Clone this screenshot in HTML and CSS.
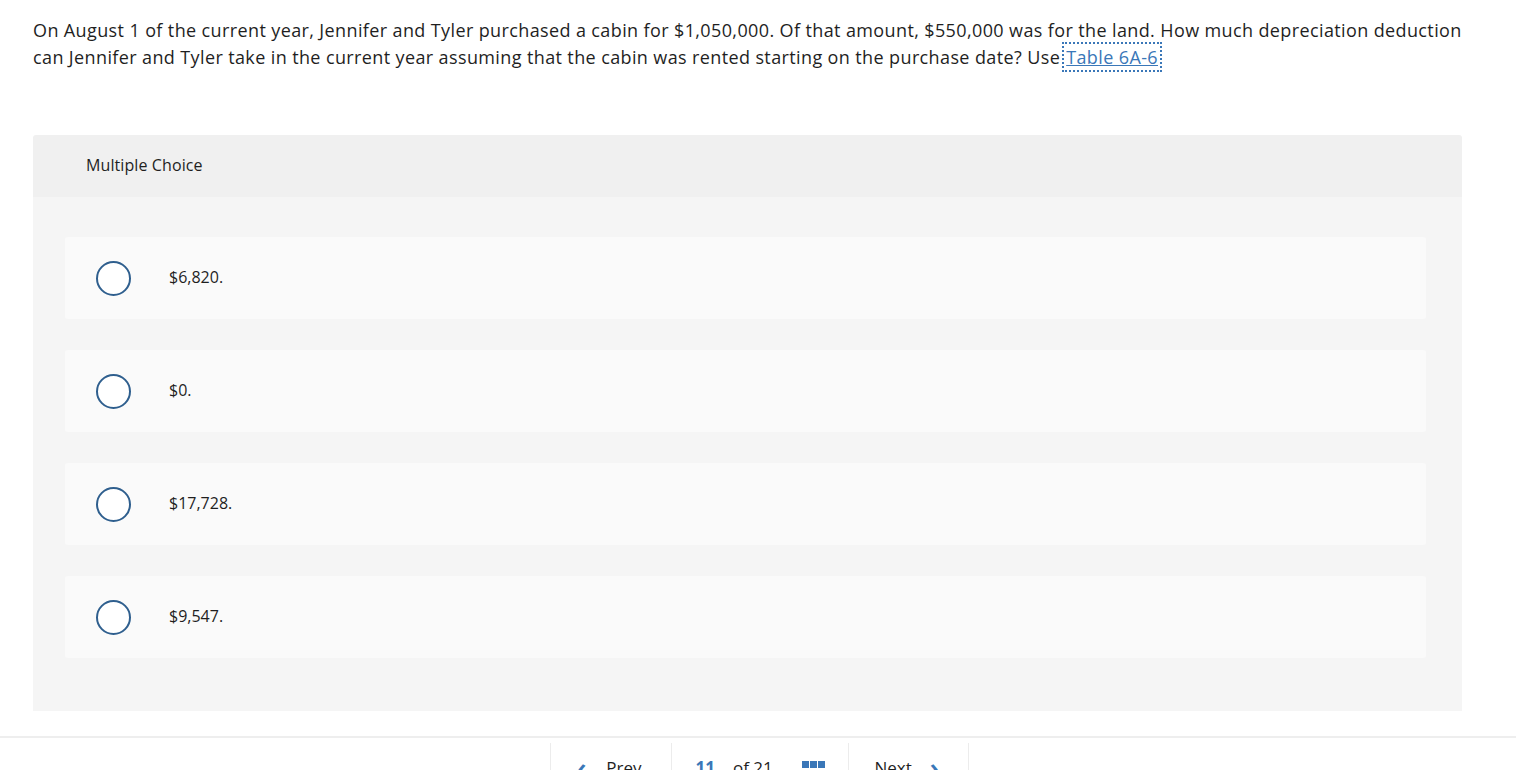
FILE: index.html
```html
<!DOCTYPE html>
<html lang="en">
<head>
<meta charset="utf-8">
<title>Multiple Choice</title>
<link rel="stylesheet" href="styles.css">
</head>
<body>
<main class="page">
  <p class="question">On August 1 of the current year, Jennifer and Tyler purchased a cabin for $1,050,000. Of that amount, $550,000 was for the land. How much depreciation deduction can Jennifer and Tyler take in the current year assuming that the cabin was rented starting on the purchase date? Use <a class="link" href="#">Table 6A-6</a></p>

  <section class="card">
    <header class="card-head">Multiple Choice</header>
    <div class="card-body">
      <label class="option"><span class="radio"></span><span class="opt-text">$6,820.</span></label>
      <label class="option"><span class="radio"></span><span class="opt-text">$0.</span></label>
      <label class="option"><span class="radio"></span><span class="opt-text">$17,728.</span></label>
      <label class="option"><span class="radio"></span><span class="opt-text">$9,547.</span></label>
    </div>
  </section>
</main>
<footer class="footer">
  <nav class="nav">
    <div class="nav-item nav-prev"><span class="chev chev-l">&#x2039;</span>Prev</div>
    <div class="nav-item nav-mid"><span class="cur">11</span>of 21<span class="grid"><i></i><i></i><i></i></span></div>
    <div class="nav-item nav-next">Next<span class="chev chev-r">&#x203A;</span></div>
  </nav>
</footer>
</body>
</html>
```
FILE: styles.css
```css
html, body {
  margin: 0;
  padding: 0;
  background: #ffffff;
}
body {
  font-family: "Open Sans", Lato, "Liberation Sans", sans-serif;
  color: #1f1f1f;
  overflow: hidden;
  height: 770px;
}
.page {
  padding: 17px 50px 0 33px;
}
.question {
  margin: 0;
  font-size: 18px;
  line-height: 27px;
  letter-spacing: 0.38px;
}
.link {
  color: #3a77b8;
  text-decoration: underline;
  outline: 2px dotted #3a77b8;
  outline-offset: 1px;
  padding: 0 1px;
}
.card {
  margin-top: 64px;
  width: 1429px;
  border-radius: 3px 3px 0 0;
  overflow: hidden;
}
.card-head {
  height: 62px;
  display: flex;
  align-items: center;
  padding-left: 53px;
  padding-bottom: 3px;
  box-sizing: border-box;
  background: #f0f0f0;
  font-size: 16px;
  letter-spacing: 0.1px;
  color: #1f1f1f;
}
.card-body {
  background: #f5f5f5;
  padding: 40px 36px 53px 32px;
  display: flex;
  flex-direction: column;
  gap: 31px;
}
.option {
  height: 82px;
  background: #fafafa;
  border-radius: 3px;
  display: flex;
  align-items: center;
  padding-left: 31px;
}
.radio {
  width: 31px;
  height: 31px;
  border: 2px solid #2f5f8e;
  border-radius: 50%;
  background: #ffffff;
  flex: none;
}
.opt-text {
  margin-left: 38px;
  font-size: 16px;
  color: #1f1f1f;
  padding-bottom: 2px;
}
.footer {
  margin-top: 25px;
  border-top: 2px solid #eeeeee;
  padding-top: 5px;
}
.nav {
  display: flex;
  justify-content: center;
  padding-left: 2px;
}
.nav-item {
  height: 60px;
  border-left: 1px solid #ececec;
  display: flex;
  align-items: flex-start;
  padding-top: 13px;
  box-sizing: border-box;
  font-size: 17px;
  color: #1f1f1f;
}
.nav-prev { width: 121px; padding-left: 27px; }
.nav-mid { width: 177px; padding-left: 24px; }
.nav-next { width: 121px; padding-left: 26px; border-right: 1px solid #ececec; }
.chev {
  color: #3a77b8;
  font-weight: 700;
  font-size: 24px;
  line-height: 22px;
}
.chev-l { margin-right: 20px; }
.chev-r { margin-left: 18px; }
.cur {
  color: #3a77b8;
  font-weight: 700;
  margin-right: 18px;
}
.grid {
  display: inline-flex;
  gap: 1px;
  margin-left: 29px;
  margin-top: 5px;
}
.grid i {
  width: 7px;
  height: 7px;
  background: #3a77b8;
  display: block;
}
```
